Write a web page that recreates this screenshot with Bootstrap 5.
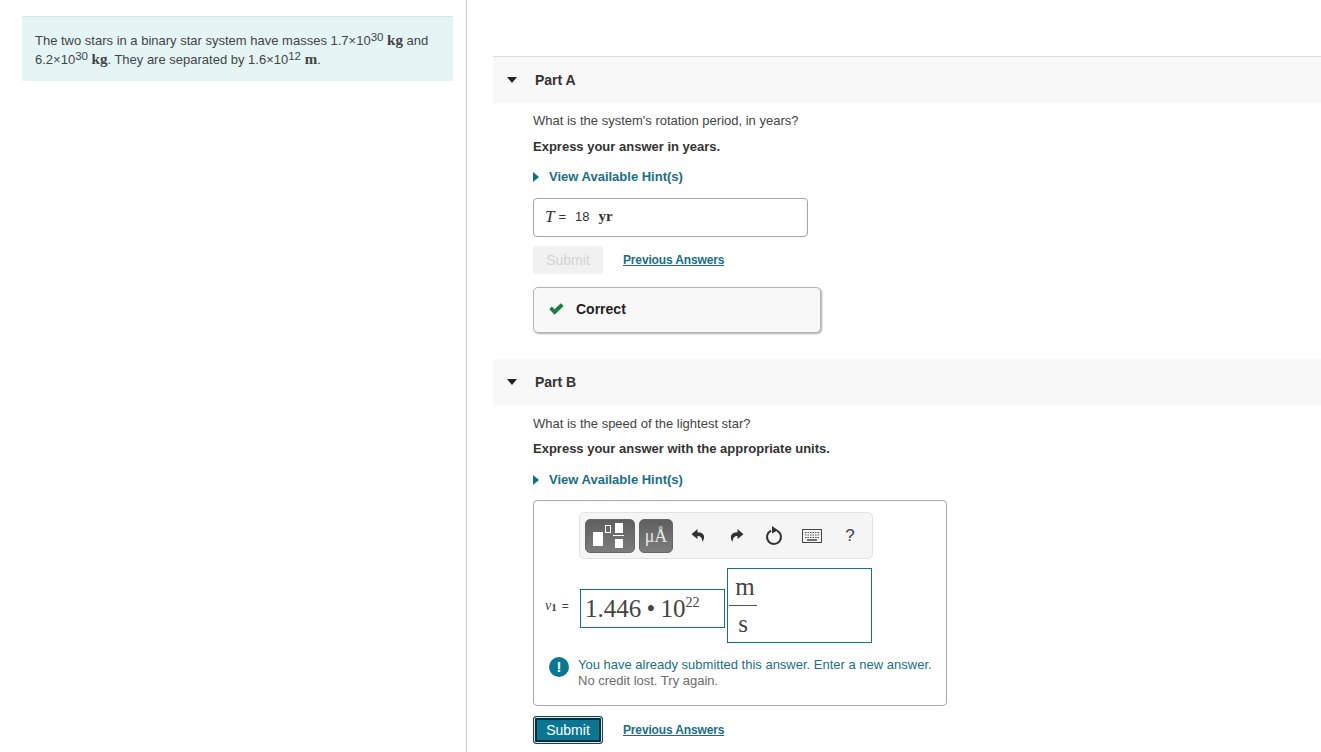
<!DOCTYPE html>
<html lang="en">
<head>
    <meta charset="UTF-8">
    <meta name="viewport" content="width=device-width, initial-scale=1.0">
    <title>Binary star system</title>
    <link href="https://cdn.jsdelivr.net/npm/bootstrap@5.3.2/dist/css/bootstrap.min.css" rel="stylesheet">
    <style>
        html, body { height: 100%; overflow: hidden; }
        body { font-family: "Liberation Sans", Arial, sans-serif; font-size: 13px; color: #333; background: #fff; }
        .left-pane { width: 467px; flex: none; padding: 16px 13px 0 22px; border-right: 1px solid #c7d3da; }
        .intro-box { background: #e5f5f6; border-top: 1px solid #d5e6e8; height: 65px; padding: 14px 13px 0; line-height: 19px; color: #444; }
        .intro-box sup { font-size: 11.5px; top: -4px; line-height: 0; vertical-align: baseline; position: relative; }
        .serif-unit { font-family: "Liberation Serif", serif; font-size: 15px; line-height: 0; font-weight: 700; color: #444; }
        .right-pane { flex: 1; padding: 56px 0 0 26px; min-width: 0; }
        .part-head { height: 46px; background: #f8f8f8; padding-left: 14px; font-size: 14px; font-weight: 700; color: #333; }
        .part-head.first-part { border-top: 1px solid #ddd; height: 47px; }
        .caret-down { width: 0; height: 0; border-left: 5.5px solid transparent; border-right: 5.5px solid transparent; border-top: 6px solid #222; margin-right: 17px; margin-right: 18px; }
        .part-body { padding-left: 40px; }
        .q-line { line-height: 20px; color: #444; }
        .q-bold { font-weight: 700; color: #333; }
        .hint-link { color: #1a6f87; font-weight: 700; line-height: 20px; text-decoration: none; }
        .caret-right { width: 0; height: 0; border-top: 5.5px solid transparent; border-bottom: 5.5px solid transparent; border-left: 6px solid #0f6f8f; margin-right: 10px; }
        .answer-box { width: 275px; height: 39px; border: 1px solid #a5a5a5; border-radius: 4px; padding: 0 0 2px 11px; font-family: "Liberation Serif", serif; color: #333; }
        .sym-italic { font-style: italic; font-size: 17px; }
        .eq-sign { font-family: "Liberation Sans", sans-serif; font-size: 13px; margin: 0 9px 0 4px; }
        .num-val { font-family: "Liberation Sans", sans-serif; font-size: 13px; margin-right: 9px; }
        .unit-val { font-weight: 700; font-size: 15px; }
        .sub-btn { width: 70px; height: 28px; font-size: 14px; padding: 0; line-height: 1; border-radius: 2px; }
        .sub-btn.is-off { background: #f1f1f1; color: #d4d4d4; border: 0; opacity: 1; }
        .sub-btn.is-on { background: #0b7694; color: #fff; border: 1px solid #0a4a60; box-shadow: inset 0 0 0 1px #cfe8ee, inset 0 0 0 3px #0d2a35; border-radius: 3px; }
        .prev-link { color: #1a6f87; font-weight: 700; font-size: 12px; letter-spacing: -.15px; margin-left: 20px; text-decoration: underline; }
        .result-box { width: 288px; height: 46px; background: #f8f8f8; border: 1px solid #b5b5b5; border-radius: 5px; box-shadow: 1px 1px 2px #aaa; padding: 0 0 2px 15px; font-size: 14px; font-weight: 700; color: #222; }
        .check-ic { margin-right: 12px; }
        .work-box { width: 414px; height: 206px; border: 1px solid #aaa; border-radius: 4px; padding: 11px 0 0 11px; }
        .tool-strip { width: 294px; height: 47px; margin-left: 34px; background: #f5f5f5; border: 1px solid #e2e2e2; border-radius: 5px; padding-left: 5px; }
        .tool-btn { height: 34px; background: linear-gradient(#5f5f5f, #7c7c7c); border: 1px solid #666; border-radius: 5px; color: #e8e8e8; }
        .tool-btn.tpl { width: 50px; margin-right: 4px; }
        .tool-btn.unit { width: 34px; font-family: "Liberation Serif", serif; font-size: 18px; line-height: 1; }
        .tool-ic { width: 38px; }
        .tool-ic.first-ic { margin-left: 6px; }
        .help-mark { font-size: 17px; color: #444; line-height: 1; }
        .eq-row { margin-top: 9px; height: 75px; }
        .v-label { width: 35px; font-family: "Liberation Serif", serif; font-size: 14px; color: #444; }
        .v-label sub { font-size: 11px; bottom: 0; position: static; vertical-align: -1px; font-style: normal; font-weight: 700; }
        .v-label .eq-small { font-family: "Liberation Sans", sans-serif; font-size: 12px; margin-left: 5px; }
        .val-input { width: 145px; height: 39px; border: 1px solid #16708a; margin-top: 21px; padding-left: 4px; font-family: "Liberation Serif", serif; font-size: 25px; word-spacing: -1px; line-height: 37px; color: #444; white-space: nowrap; }
        .val-input sup { font-size: 14px; top: -10px; position: relative; vertical-align: baseline; line-height: 0; }
        .unit-input { width: 145px; height: 75px; border: 1px solid #16708a; margin-left: 2px; padding-left: 1px; font-family: "Liberation Serif", serif; font-size: 25px; color: #444; }
        .frac-part { width: 28px; text-align: center; line-height: 36px; height: 37px; }
        .frac-part.top-part { border-bottom: 1px solid #555; padding-left: 4px; }
        .msg-row { margin-top: 13px; padding-left: 4px; line-height: 16px; }
        .msg-icon { width: 20px; height: 20px; background: #0b7694; color: #fff; font-weight: 700; font-size: 15px; line-height: 20px; text-align: center; margin: 1px 9px 0 0; }
        .msg-text { padding-top: 1px; }
        .msg-main { color: #1a7088; }
        .msg-sub { color: #6b6b6b; }
        /* gaps between the stacked rows, read off the picture */
        .gap-a1 { margin-top: 8px; }
        .gap-a2 { margin-top: 6px; }
        .gap-a3 { margin-top: 10px; }
        .gap-a4 { margin-top: 11px; }
        .gap-a5 { margin-top: 9px; }
        .gap-a6 { margin-top: 13px; }
        .gap-part { margin-top: 26px; }
        .gap-b1 { margin-top: 9px; }
        .gap-b2 { margin-top: 5px; }
        .gap-b3 { margin-top: 11px; }
        .gap-b4 { margin-top: 10px; }
    </style>
</head>
<body>
    <div class="d-flex h-100">
        <div class="left-pane">
            <div class="intro-box">
                The two stars in a binary star system have masses 1.7×10<sup>30</sup> <span class="serif-unit">kg</span> and
                6.2×10<sup>30</sup> <span class="serif-unit">kg</span>. They are separated by 1.6×10<sup>12</sup> <span class="serif-unit">m</span>.
            </div>
        </div>

        <div class="right-pane">
            <div class="part-head first-part d-flex align-items-center"><span class="caret-down"></span>Part A</div>
            <div class="part-body">
                <div class="q-line gap-a1">What is the system's rotation period, in years?</div>
                <div class="q-line q-bold gap-a2">Express your answer in years.</div>
                <div class="d-flex align-items-center gap-a3">
                    <span class="caret-right"></span><a class="hint-link" href="#">View Available Hint(s)</a>
                </div>
                <div class="answer-box d-flex align-items-center gap-a4 bg-white">
                    <span class="sym-italic">T</span><span class="eq-sign">=</span><span class="num-val">18</span><span class="unit-val">yr</span>
                </div>
                <div class="d-flex align-items-center gap-a5">
                    <button class="btn sub-btn is-off" disabled>Submit</button>
                    <a class="prev-link" href="#">Previous Answers</a>
                </div>
                <div class="result-box d-flex align-items-center gap-a6">
                    <svg width="15" height="12" viewBox="0 0 15 12" class="check-ic"><path d="M.3 6.3 L2.8 3.6 L5.6 6.3 L11.8 .2 L14.6 2.9 L5.6 11.8 Z" fill="#12804a"/></svg>
                    Correct
                </div>
            </div>

            <div class="part-head d-flex align-items-center gap-part"><span class="caret-down"></span>Part B</div>
            <div class="part-body">
                <div class="q-line gap-b1">What is the speed of the lightest star?</div>
                <div class="q-line q-bold gap-b2">Express your answer with the appropriate units.</div>
                <div class="d-flex align-items-center gap-b3">
                    <span class="caret-right"></span><a class="hint-link" href="#">View Available Hint(s)</a>
                </div>
                <div class="work-box gap-b4">
                    <div class="tool-strip d-flex align-items-center">
                        <div class="tool-btn tpl d-flex align-items-center justify-content-center">
                            <svg width="48" height="32" viewBox="0 0 48 32">
                                <rect x="7" y="12" width="10" height="14" fill="#fff"/>
                                <rect x="19.5" y="5.5" width="5" height="7" fill="none" stroke="#fff"/>
                                <rect x="29" y="3" width="8" height="10" fill="#fff"/>
                                <rect x="27" y="15" width="11" height="1" fill="#fff"/>
                                <rect x="29" y="19" width="8" height="9" fill="#fff"/>
                            </svg>
                        </div>
                        <div class="tool-btn unit d-flex align-items-center justify-content-center">μÅ</div>
                        <div class="tool-ic first-ic d-flex justify-content-center">
                            <svg width="15" height="15" viewBox="0 0 15 15"><path d="M6.5 1 L.5 6.2 L6.5 11 V8 C9.5 8 11 9.5 11.5 14 C14.5 9 13.5 4.3 6.5 4.2 Z" fill="#333"/></svg>
                        </div>
                        <div class="tool-ic d-flex justify-content-center">
                            <svg width="15" height="15" viewBox="0 0 15 15"><path d="M8.5 1 L14.5 6.2 L8.5 11 V8 C5.5 8 4 9.5 3.5 14 C.5 9 1.5 4.3 8.5 4.2 Z" fill="#333"/></svg>
                        </div>
                        <div class="tool-ic d-flex justify-content-center">
                            <svg width="18" height="19" viewBox="0 0 18 19"><path d="M6 4.6 A7 7 0 1 0 12 4.6" fill="none" stroke="#333" stroke-width="2"/><path d="M7 0 L13 4.2 L7 7.5 Z" fill="#333"/></svg>
                        </div>
                        <div class="tool-ic d-flex justify-content-center">
                            <svg width="20" height="14" viewBox="0 0 20 14"><rect x=".5" y=".5" width="19" height="13" fill="#f5f5f5" stroke="#444"/><path d="M3 3.5 H17 M3 6 H17 M3 8.5 H17" stroke="#555" stroke-dasharray="1.5 1"/><path d="M5 11 H15" stroke="#444" stroke-width="1.5"/></svg>
                        </div>
                        <div class="tool-ic text-center help-mark">?</div>
                    </div>
                    <div class="eq-row d-flex">
                        <div class="v-label d-flex align-items-center"><span><i>v</i><sub>1</sub><span class="eq-small">=</span></span></div>
                        <div class="val-input">1.446 • 10<sup>22</sup></div>
                        <div class="unit-input">
                            <div class="frac-part top-part">m</div>
                            <div class="frac-part">s</div>
                        </div>
                    </div>
                    <div class="msg-row d-flex">
                        <div class="msg-icon rounded-circle flex-shrink-0">!</div>
                        <div class="msg-text">
                            <div class="msg-main">You have already submitted this answer. Enter a new answer.</div>
                            <div class="msg-sub">No credit lost. Try again.</div>
                        </div>
                    </div>
                </div>
                <div class="d-flex align-items-center gap-b4">
                    <button class="btn sub-btn is-on">Submit</button>
                    <a class="prev-link" href="#">Previous Answers</a>
                </div>
            </div>
        </div>
    </div>
</body>
</html>
